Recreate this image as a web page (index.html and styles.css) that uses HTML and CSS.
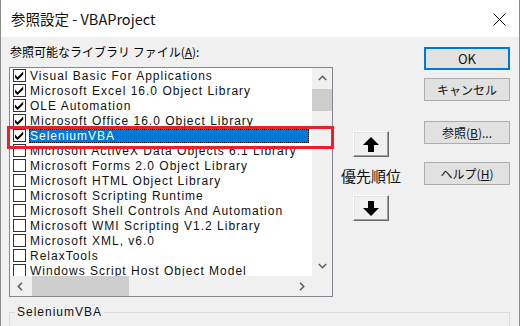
FILE: index.html
```html
<!DOCTYPE html>
<html lang="ja">
<head>
    <meta charset="UTF-8">
    <title>参照設定 - VBAProject</title>
    <link rel="stylesheet" href="styles.css">
</head>
<body>
    <div class="window">
        <div class="titlebar">
            <span class="title">参照設定 - VBAProject</span>
            <svg class="close" width="13" height="13" viewBox="0 0 13 13">
                <path d="M0.5 0.5 L12.5 12.5 M12.5 0.5 L0.5 12.5" stroke="#000" stroke-width="1" fill="none"/>
            </svg>
        </div>

        <div class="client">
            <div class="main">
                <!-- 参照可能なライブラリ -->
                <div class="refs">
                    <div class="label">参照可能なライブラリ ファイル(<u>A</u>):</div>
                    <div class="listbox">
                        <div class="rows">
                            <div class="row"><span class="check"><svg viewBox="0 0 11 11"><polygon points="1,4.6 3.6,7.2 9.2,1.6 9.2,4.4 3.6,10 1,7.4"/></svg></span><span class="name">Visual Basic For Applications</span></div>
                            <div class="row"><span class="check"><svg viewBox="0 0 11 11"><polygon points="1,4.6 3.6,7.2 9.2,1.6 9.2,4.4 3.6,10 1,7.4"/></svg></span><span class="name">Microsoft Excel 16.0 Object Library</span></div>
                            <div class="row"><span class="check"><svg viewBox="0 0 11 11"><polygon points="1,4.6 3.6,7.2 9.2,1.6 9.2,4.4 3.6,10 1,7.4"/></svg></span><span class="name">OLE Automation</span></div>
                            <div class="row"><span class="check"><svg viewBox="0 0 11 11"><polygon points="1,4.6 3.6,7.2 9.2,1.6 9.2,4.4 3.6,10 1,7.4"/></svg></span><span class="name">Microsoft Office 16.0 Object Library</span></div>
                            <div class="row selected"><span class="check"><svg viewBox="0 0 11 11"><polygon points="1,4.6 3.6,7.2 9.2,1.6 9.2,4.4 3.6,10 1,7.4"/></svg></span><span class="name">SeleniumVBA</span></div>
                            <div class="row"><span class="check"></span><span class="name">Microsoft ActiveX Data Objects 6.1 Library</span></div>
                            <div class="row"><span class="check"></span><span class="name">Microsoft Forms 2.0 Object Library</span></div>
                            <div class="row"><span class="check"></span><span class="name">Microsoft HTML Object Library</span></div>
                            <div class="row"><span class="check"></span><span class="name">Microsoft Scripting Runtime</span></div>
                            <div class="row"><span class="check"></span><span class="name">Microsoft Shell Controls And Automation</span></div>
                            <div class="row"><span class="check"></span><span class="name">Microsoft WMI Scripting V1.2 Library</span></div>
                            <div class="row"><span class="check"></span><span class="name">Microsoft XML, v6.0</span></div>
                            <div class="row"><span class="check"></span><span class="name">RelaxTools</span></div>
                            <div class="row"><span class="check"></span><span class="name">Windows Script Host Object Model</span></div>
                        </div>
                        <div class="vscroll">
                            <div class="arrow">
                                <svg width="9" height="6" viewBox="0 0 9 6"><path d="M0.8 5 L4.5 1.3 L8.2 5" stroke="#606060" stroke-width="1.6" fill="none"/></svg>
                            </div>
                            <div class="vthumb"></div>
                            <div class="track"></div>
                            <div class="arrow">
                                <svg width="9" height="6" viewBox="0 0 9 6"><path d="M0.8 1 L4.5 4.7 L8.2 1" stroke="#606060" stroke-width="1.6" fill="none"/></svg>
                            </div>
                        </div>
                        <div class="hscroll">
                            <div class="arrow">
                                <svg width="6" height="9" viewBox="0 0 6 9"><path d="M5 0.8 L1.3 4.5 L5 8.2" stroke="#606060" stroke-width="1.6" fill="none"/></svg>
                            </div>
                            <div class="hthumb"></div>
                            <div class="track"></div>
                            <div class="arrow">
                                <svg width="6" height="9" viewBox="0 0 6 9"><path d="M1 0.8 L4.7 4.5 L1 8.2" stroke="#606060" stroke-width="1.6" fill="none"/></svg>
                            </div>
                        </div>
                        <div class="corner"></div>
                    </div>
                    <!-- 赤枠 (注釈) -->
                    <div class="mark"></div>
                </div>

                <!-- 優先順位 -->
                <div class="priority">
                    <div class="move">
                        <svg width="16" height="15" viewBox="0 0 16 15"><path d="M8 0 L16 8 L11 8 L11 15 L5 15 L5 8 L0 8 Z" fill="#000"/></svg>
                    </div>
                    <div class="priority-label">優先順位</div>
                    <div class="move">
                        <svg width="16" height="15" viewBox="0 0 16 15"><path d="M8 15 L16 7 L11 7 L11 0 L5 0 L5 7 L0 7 Z" fill="#000"/></svg>
                    </div>
                </div>

                <div class="buttons">
                    <div class="btn default">OK</div>
                    <div class="btn cancel">キャンセル</div>
                    <div class="btn browse">参照(<u>B</u>)...</div>
                    <div class="btn help">ヘルプ(<u>H</u>)</div>
                </div>
            </div>

            <fieldset class="desc">
                <legend>SeleniumVBA</legend>
            </fieldset>
        </div>
    </div>
</body>
</html>
```

FILE: styles.css
```css
* { box-sizing: border-box; }
body { margin: 0; font-family: "Liberation Sans", "Noto Sans CJK JP", sans-serif; font-size: 12px; color: #000; }

.window { width: 520px; height: 326px; border-left: 1px solid #8c8c8c; border-right: 1px solid #8c8c8c; background: #f0f0f0; overflow: hidden; }
.titlebar { height: 37px; background: #fff; display: flex; align-items: center; justify-content: space-between; padding: 0 13px 0 10px; }
.title { font-family: "Noto Sans CJK JP", sans-serif; font-size: 14.5px; color: #111; }
.close { display: block; margin-top: 1px; }

.client { padding: 7px 9px 0 8px; }
.main { display: flex; }

/* リストボックス */
.refs { width: 324px; position: relative; }
.label { height: 23px; line-height: 16px; padding-left: 1px; font-family: "Noto Sans CJK JP", sans-serif; font-size: 12px; }
.listbox { height: 230px; border: 1px solid #828790; background: #fff; display: grid; grid-template-columns: 1fr 20px; grid-template-rows: 1fr 20px; }
.rows { overflow: hidden; }
.row { height: 15px; display: flex; align-items: center; white-space: nowrap; letter-spacing: 1px; color: #111; }
.check { flex: none; width: 13px; height: 13px; margin-left: 3px; border: 1px solid #333; background: #fff; }
.check svg { display: block; width: 11px; height: 11px; fill: #000; }
.name { margin-left: 3px; padding-left: 1px; height: 14px; line-height: 14px; }
.selected .name { flex: 1; margin-right: 3px; background: #0078d7; color: #fff; outline: 1px dotted #000; outline-offset: -1px; }

.vscroll { background: #f0f0f0; display: flex; flex-direction: column; }
.vscroll .arrow { height: 20px; display: flex; align-items: center; justify-content: center; }
.vthumb { height: 22px; margin-top: 1px; background: #cdcdcd; }
.track { flex: 1; }
.hscroll { background: #f0f0f0; display: flex; }
.hscroll .arrow { width: 20px; display: flex; align-items: center; justify-content: center; }
.hthumb { width: 97px; margin-left: 2px; background: #cdcdcd; }
.corner { background: #f0f0f0; }

.mark { position: absolute; left: -2px; top: 82px; width: 327px; height: 23px; border: 3px solid #e8202a; }

/* 優先順位 */
.priority { width: 62px; margin-left: 7px; padding-top: 87px; display: flex; flex-direction: column; align-items: center; }
.move { width: 36px; height: 26px; display: flex; align-items: center; justify-content: center; background: #f0f0f0; border: 1px solid; border-color: #fff #696969 #696969 #fff; box-shadow: inset -1px -1px #a0a0a0, inset 1px 1px #e3e3e3; }
.priority-label { margin: 10px 0; height: 18px; line-height: 18px; font-family: "Noto Sans CJK JP", sans-serif; font-size: 15px; color: #111; }

/* ボタン */
.buttons { width: 86px; margin-left: 22px; padding-top: 3px; display: flex; flex-direction: column; }
.btn { height: 23px; display: flex; align-items: center; justify-content: center; background: #e1e1e1; border: 1px solid #adadad; font-family: "Noto Sans CJK JP", sans-serif; font-size: 12px; color: #111; }
.btn.default { border: 2px solid #0078d7; font-size: 13px; }
.btn.cancel { margin-top: 8px; }
.btn.browse { margin-top: 20px; }
.btn.help { margin-top: 18px; }

.desc { margin: 7px 0 0 0; padding: 0 5px; height: 60px; border: 1px solid #dcdcdc; min-width: 0; }
.desc legend { padding: 0 2px; line-height: 16px; letter-spacing: 1px; color: #111; }
```
